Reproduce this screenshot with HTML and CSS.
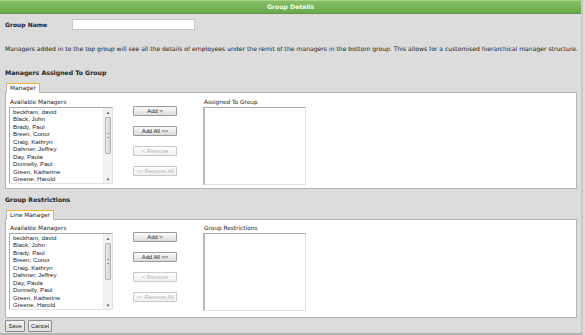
FILE: index.html
```html
<!DOCTYPE html>
<html>
<head>
    <meta charset="utf-8">
    <link rel="stylesheet" href="styles.css">
</head>
<body>
<div class="page">
    <div class="header">Group Details</div>
    <div class="content">
        <div class="name-row">
            <label>Group Name</label>
            <input type="text" class="name-input">
        </div>
        <p class="intro">Managers added in to the top group will see all the details of employees under the remit of the managers in the bottom group. This allows for a customised hierarchical manager structure.</p>

        <h3 class="section-title">Managers Assigned To Group</h3>
        <div class="tabs"><span class="tab">Manager</span></div>
        <div class="panel">
            <div class="col">
                <div class="list-label">Available Managers</div>
                <div class="listbox">
                    <ul>
                        <li>beckham, david</li>
                        <li>Black, John</li>
                        <li>Brady, Paul</li>
                        <li>Breen, Conor</li>
                        <li>Craig, Kathryn</li>
                        <li>Dahmer, Jeffrey</li>
                        <li>Day, Paula</li>
                        <li>Donnelly, Paul</li>
                        <li>Green, Katherine</li>
                        <li>Greene, Harold</li>
                    </ul>
                    <div class="scrollbar">
                        <span class="arrow">&#9652;</span>
                        <span class="thumb"><span class="grip"></span></span>
                        <span class="arrow">&#9662;</span>
                    </div>
                </div>
            </div>
            <div class="buttons">
                <button class="btn">Add &gt;</button>
                <button class="btn">Add All &gt;&gt;</button>
                <button class="btn" disabled>&lt; Remove</button>
                <button class="btn" disabled>&lt;&lt; Remove All</button>
            </div>
            <div class="col">
                <div class="list-label">Assigned To Group</div>
                <div class="listbox target"></div>
            </div>
        </div>

        <h3 class="section-title second">Group Restrictions</h3>
        <div class="tabs"><span class="tab">Line Manager</span></div>
        <div class="panel lower">
            <div class="col">
                <div class="list-label">Available Managers</div>
                <div class="listbox">
                    <ul>
                        <li>beckham, david</li>
                        <li>Black, John</li>
                        <li>Brady, Paul</li>
                        <li>Breen, Conor</li>
                        <li>Craig, Kathryn</li>
                        <li>Dahmer, Jeffrey</li>
                        <li>Day, Paula</li>
                        <li>Donnelly, Paul</li>
                        <li>Green, Katherine</li>
                        <li>Greene, Harold</li>
                    </ul>
                    <div class="scrollbar">
                        <span class="arrow">&#9652;</span>
                        <span class="thumb"><span class="grip"></span></span>
                        <span class="arrow">&#9662;</span>
                    </div>
                </div>
            </div>
            <div class="buttons">
                <button class="btn">Add &gt;</button>
                <button class="btn">Add All &gt;&gt;</button>
                <button class="btn" disabled>&lt; Remove</button>
                <button class="btn" disabled>&lt;&lt; Remove All</button>
            </div>
            <div class="col">
                <div class="list-label">Group Restrictions</div>
                <div class="listbox target"></div>
            </div>
        </div>

        <div class="actions">
            <button class="btn small save">Save</button>
            <button class="btn small cancel">Cancel</button>
        </div>
    </div>
</div>
</body>
</html>
```

FILE: styles.css
```css
body {
    margin: 0;
    background-color: #dcdcdc;
    color: #222;
    font-family: 'DejaVu Sans', Verdana, sans-serif;
    font-size: 6px;
}

.page {
    width: 581px;
    height: 333px;
    border-right: 2px solid #c8c8c8;
    border-bottom: 2px solid #b4b4b4;
    background-color: #dcdcdc;
}

.header {
    height: 12px;
    line-height: 12px;
    border-top: 1px solid #a8d48c;
    border-bottom: 1px solid #5f9444;
    background: linear-gradient(#86c066, #6aa84c);
    color: #f4ffe8;
    font-weight: bold;
    font-size: 6.1px;
    text-align: center;
}

.content {
    padding: 0 0 0 5px;
}

.name-row {
    display: flex;
    align-items: center;
    margin-top: 4px;
    height: 12px;
}

.name-row label {
    width: 67px;
    font-weight: bold;
    font-size: 6px;
}

.name-input {
    width: 123px;
    height: 11px;
    box-sizing: border-box;
    border: 1px solid #c8c8c8;
    background: #fff;
    padding: 0;
    margin: 0;
}

.intro {
    margin: 15px 0 0 0;
    line-height: 8px;
    font-size: 6.08px;
    white-space: nowrap;
}

.section-title {
    margin: 16px 0 0 0;
    font-size: 6.2px;
    line-height: 8px;
}

.section-title.second {
    margin-top: 7px;
}

.tabs {
    margin-top: 4px;
    padding-left: 1px;
    height: 11px;
    display: flex;
    align-items: flex-end;
}

.tab {
    display: inline-block;
    height: 9px;
    line-height: 9px;
    padding: 0 3px;
    font-size: 5.9px;
    background: #fff;
    border: 1px solid #b8b8b8;
    border-top: 1px solid #f0b429;
    border-bottom: none;
    position: relative;
    top: 1px;
}

.panel {
    width: 564px;
    display: flex;
    align-items: flex-start;
    padding: 5px 3px 3px 3px;
    background: #fff;
    border: 1px solid #b4b4b4;
}

.panel.lower {
    padding-top: 4px;
    padding-bottom: 6px;
}

.col {
    display: flex;
    flex-direction: column;
}

.list-label {
    height: 9px;
    line-height: 9px;
    padding-left: 1px;
    font-size: 5.8px;
}

.listbox {
    width: 104px;
    height: 77px;
    box-sizing: border-box;
    border: 1px solid #a8a8a8;
    border-right-color: #e0e0e0;
    border-bottom-color: #e0e0e0;
    display: flex;
    background: #fff;
}

.listbox ul {
    flex: 1;
    list-style: none;
    margin: 0;
    padding: 0 0 0 3px;
    font-family: 'Liberation Sans', Arial, sans-serif;
    font-size: 6.2px;
}

.listbox li {
    height: 7.45px;
    line-height: 7.45px;
    white-space: nowrap;
}

.scrollbar {
    width: 8px;
    display: flex;
    flex-direction: column;
    align-items: center;
    background: #f2f2f2;
    border-left: 1px solid #ececec;
}

.arrow {
    height: 8px;
    line-height: 8px;
    font-size: 5px;
    color: #555;
}

.thumb {
    width: 6px;
    height: 37px;
    margin: 1px 0;
    box-sizing: border-box;
    border: 1px solid #b4b4b4;
    border-radius: 1px;
    background: linear-gradient(90deg, #ececec, #d4d4d4);
    display: flex;
    align-items: center;
    justify-content: center;
}

.grip {
    width: 2px;
    height: 3px;
    border-top: 1px solid #999;
    border-bottom: 1px solid #999;
}

.scrollbar .arrow:last-child {
    margin-top: auto;
}

.listbox.target {
    width: 103px;
    height: 78px;
    border-left: 2px solid #b8b8b8;
}

.buttons {
    display: flex;
    flex-direction: column;
    gap: 10px;
    margin: 8px 26px 0 20px;
}

.btn {
    width: 44px;
    height: 10px;
    padding: 0;
    margin: 0;
    font-family: 'Liberation Sans', Arial, sans-serif;
    font-size: 5.8px;
    color: #222;
    border: 1px solid #9a9a9a;
    border-radius: 1px;
    background: linear-gradient(#fafafa, #dcdcdc);
}

.btn:disabled {
    color: #b4b4b4;
    border-color: #c8c8c8;
    background: linear-gradient(#fdfdfd, #f0f0f0);
}

.actions {
    display: flex;
    gap: 3px;
    margin-top: 2px;
}

.btn.small {
    height: 12px;
    border-color: #8c8c8c;
    background: linear-gradient(#f4f4f4, #e0e0e0);
}

.btn.save {
    width: 20px;
}

.btn.cancel {
    width: 24px;
}
```
